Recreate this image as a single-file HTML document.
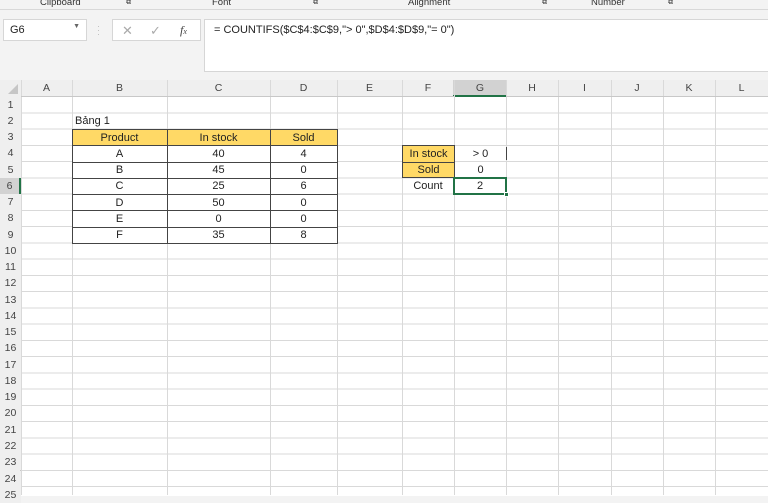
<!DOCTYPE html>
<html><head><meta charset="utf-8"><style>
*{margin:0;padding:0;box-sizing:border-box}
body{width:768px;height:495px;overflow:hidden;background:#f3f3f3;font-family:"Liberation Sans",sans-serif;font-size:11px;color:#222;position:relative}
.a{position:absolute}
.rib{left:0;top:0;width:768px;height:10px;background:#f3f3f3;border-bottom:1px solid #d8d8d8}
.rib span{position:absolute;top:-2px;font-size:9.5px;color:#333;line-height:10px}
.box{background:#fff;border:1px solid #d6d6d6}
.grid{left:21px;top:96.5px;width:747px;height:399px;background:#fff repeating-linear-gradient(to bottom,transparent 0 15.26px,#d9d9d9 15.26px 16.26px)}
.v{top:80px;width:1px;height:415px;background:#d9d9d9}
.ch{top:80px;height:16.5px;text-align:center;line-height:16px;color:#444;font-size:10.5px;border-bottom:1px solid #c8c8c8}
.rh{left:0;width:21px;height:16.26px;text-align:center;line-height:16px;color:#444;font-size:10.5px;background:#efefef}
.c{position:absolute;height:16.26px;line-height:16px;text-align:center}
.hl{position:absolute;left:72px;width:266px;height:1px;background:#444}
.vl{position:absolute;top:129px;width:1px;height:114.8px;background:#444}
</style></head><body>
<div class="a rib"><span style="left:40px">Clipboard</span><span style="left:212px">Font</span><span style="left:408px">Alignment</span><span style="left:591px">Number</span>
<span style="left:126px;font-size:7px">⧉</span><span style="left:313px;font-size:7px">⧉</span><span style="left:542px;font-size:7px">⧉</span><span style="left:668px;font-size:7px">⧉</span></div>
<div class="a box" style="left:3px;top:19px;width:84px;height:22px;padding:4px 6px">G6<span style="position:absolute;right:6px;top:3px;font-size:7px;color:#666">▼</span></div>
<div class="a" style="left:97px;top:24px;color:#bbb;font-size:9px;line-height:4px">·<br>·<br>·</div>
<div class="a box" style="left:112px;top:19px;width:89px;height:22px;color:#aaa"><span class="a" style="left:9px;top:3px;font-size:13px">✕</span><span class="a" style="left:37px;top:3px;font-size:13px">✓</span><span class="a" style="left:67px;top:3px;font-family:'Liberation Serif',serif;font-style:italic;color:#444;font-size:12px">f<span style="font-size:8px">x</span></span></div>
<div class="a box" style="left:204px;top:19px;width:570px;height:53px;padding:4px 9px;font-size:11px">= COUNTIFS($C$4:$C$9,"&gt; 0",$D$4:$D$9,"= 0")</div>
<div class="a" style="left:0;top:80px;width:768px;height:16.5px;background:#efefef"></div>
<div class="a" style="left:8px;top:84px;width:0;height:0;border-left:10px solid transparent;border-bottom:10px solid #c6c6c6"></div>
<div class="a grid"></div>
<div class="a" style="left:0;top:96.5px;width:21px;height:399px;background:#efefef;border-right:1px solid #c8c8c8"></div>
<div class="a" style="left:453px;top:80px;width:53px;height:16.5px;background:#d2d2d2;border-bottom:2px solid #217346"></div>
<div class="a v" style="left:21px"></div><div class="a v" style="left:72px"></div><div class="a v" style="left:167px"></div><div class="a v" style="left:270px"></div><div class="a v" style="left:337px"></div><div class="a v" style="left:402px"></div><div class="a v" style="left:454px"></div><div class="a v" style="left:506px"></div><div class="a v" style="left:558px"></div><div class="a v" style="left:611px"></div><div class="a v" style="left:663px"></div><div class="a v" style="left:715px"></div>
<div class="a ch" style="left:21px;width:51px">A</div><div class="a ch" style="left:72px;width:95px">B</div><div class="a ch" style="left:167px;width:103px">C</div><div class="a ch" style="left:270px;width:67px">D</div><div class="a ch" style="left:337px;width:65px">E</div><div class="a ch" style="left:402px;width:52px">F</div><div class="a ch" style="left:454px;width:52px;border:none">G</div><div class="a ch" style="left:506px;width:52px">H</div><div class="a ch" style="left:558px;width:53px">I</div><div class="a ch" style="left:611px;width:52px">J</div><div class="a ch" style="left:663px;width:52px">K</div><div class="a ch" style="left:715px;width:53px">L</div>
<div class="a rh" style="top:96.5px">1</div><div class="a rh" style="top:112.8px">2</div><div class="a rh" style="top:129px">3</div><div class="a rh" style="top:145.3px">4</div><div class="a rh" style="top:161.5px">5</div><div class="a rh" style="top:177.8px;background:#d2d2d2;border-right:2px solid #217346">6</div><div class="a rh" style="top:194.1px">7</div><div class="a rh" style="top:210.3px">8</div><div class="a rh" style="top:226.6px">9</div><div class="a rh" style="top:242.8px">10</div><div class="a rh" style="top:259.1px">11</div><div class="a rh" style="top:275.4px">12</div><div class="a rh" style="top:291.6px">13</div><div class="a rh" style="top:307.9px">14</div><div class="a rh" style="top:324.1px">15</div><div class="a rh" style="top:340.4px">16</div><div class="a rh" style="top:356.7px">17</div><div class="a rh" style="top:372.9px">18</div><div class="a rh" style="top:389.2px">19</div><div class="a rh" style="top:405.4px">20</div><div class="a rh" style="top:421.7px">21</div><div class="a rh" style="top:438px">22</div><div class="a rh" style="top:454.2px">23</div><div class="a rh" style="top:470.5px">24</div><div class="a rh" style="top:486.7px">25</div>
<div class="a" style="left:75px;top:113px;line-height:16px">Bảng 1</div>
<div class="a" style="left:72px;top:129px;width:266px;height:114px;background:#fff"></div>
<div class="a" style="left:72px;top:129px;width:266px;height:16.26px;background:#ffd966"></div>
<div class="hl" style="top:129px"></div><div class="hl" style="top:145.3px"></div><div class="hl" style="top:161.5px"></div><div class="hl" style="top:177.8px"></div><div class="hl" style="top:194.1px"></div><div class="hl" style="top:210.3px"></div><div class="hl" style="top:226.6px"></div><div class="hl" style="top:242.8px"></div>
<div class="vl" style="left:72px"></div><div class="vl" style="left:167px"></div><div class="vl" style="left:270px"></div><div class="vl" style="left:337px"></div>
<div class="c" style="left:72px;top:129.5px;width:95px">Product</div><div class="c" style="left:167px;top:129.5px;width:103px">In stock</div><div class="c" style="left:270px;top:129.5px;width:67px">Sold</div>
<div class="c" style="left:72px;top:145.8px;width:95px">A</div><div class="c" style="left:167px;top:145.8px;width:103px">40</div><div class="c" style="left:270px;top:145.8px;width:67px">4</div>
<div class="c" style="left:72px;top:162px;width:95px">B</div><div class="c" style="left:167px;top:162px;width:103px">45</div><div class="c" style="left:270px;top:162px;width:67px">0</div>
<div class="c" style="left:72px;top:178.3px;width:95px">C</div><div class="c" style="left:167px;top:178.3px;width:103px">25</div><div class="c" style="left:270px;top:178.3px;width:67px">6</div>
<div class="c" style="left:72px;top:194.6px;width:95px">D</div><div class="c" style="left:167px;top:194.6px;width:103px">50</div><div class="c" style="left:270px;top:194.6px;width:67px">0</div>
<div class="c" style="left:72px;top:210.8px;width:95px">E</div><div class="c" style="left:167px;top:210.8px;width:103px">0</div><div class="c" style="left:270px;top:210.8px;width:67px">0</div>
<div class="c" style="left:72px;top:227.1px;width:95px">F</div><div class="c" style="left:167px;top:227.1px;width:103px">35</div><div class="c" style="left:270px;top:227.1px;width:67px">8</div>
<div class="c" style="left:402px;top:145.3px;width:53px;height:33px;background:#ffd966;border:1px solid #444"></div>
<div class="a" style="left:402px;top:161.5px;width:53px;height:1px;background:#444"></div>
<div class="c" style="left:402px;top:145.8px;width:53px">In stock</div>
<div class="c" style="left:402px;top:162px;width:53px">Sold</div>
<div class="c" style="left:402px;top:178.3px;width:52px">Count</div>
<div class="c" style="left:455px;top:146px;width:51px;height:15px;background:#fff">&gt; 0</div>
<div class="a" style="left:506px;top:147px;width:1px;height:13px;background:#444"></div>
<div class="c" style="left:455px;top:162.3px;width:51px;height:15px;background:#fff">0</div>
<div class="c" style="left:453px;top:177px;width:54px;height:18px;background:#fff;border:2px solid #217346;line-height:14px">2</div>
<div class="a" style="left:504px;top:192px;width:5px;height:5px;background:#217346;border:1px solid #fff"></div>
</body></html>
